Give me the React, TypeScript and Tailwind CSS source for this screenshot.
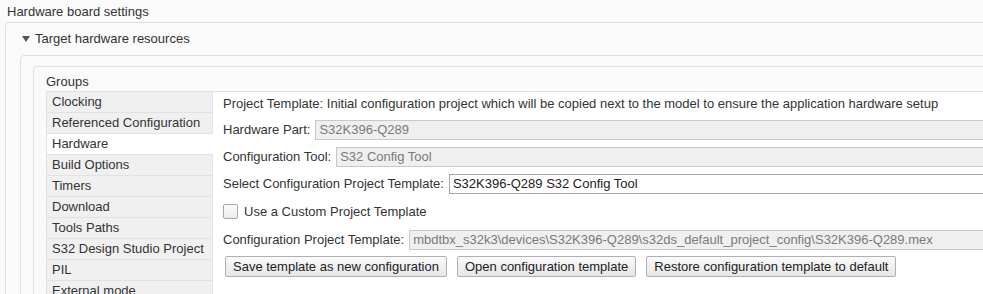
import React from 'react';

const groups = [
  'Clocking',
  'Referenced Configuration',
  'Hardware',
  'Build Options',
  'Timers',
  'Download',
  'Tools Paths',
  'S32 Design Studio Project',
  'PIL',
  'External mode',
];

const ReadOnlyField: React.FC<{ label: string; value: string; editable?: boolean; mt: string }> = ({ label, value, editable, mt }) => (
  <div className={`flex items-center h-[20px] ${mt}`}>
    <span className="whitespace-nowrap mr-[5px]">{label}</span>
    <div
      className={`flex-1 h-[20px] flex items-center pl-[3px] border whitespace-nowrap overflow-hidden ${
        editable ? 'bg-white text-[#222] border-[#a8a8a8]' : 'bg-[#efefef] text-[#7a7a7a] border-[#c8c8c8]'
      }`}
    >
      {value}
    </div>
  </div>
);

const Btn: React.FC<{ children: React.ReactNode }> = ({ children }) => (
  <button className="h-[21px] px-[7px] border border-[#b0b0b0] rounded-[2px] bg-gradient-to-b from-[#fafafa] to-[#e6e6e6] text-[#222] whitespace-nowrap leading-[19px]">
    {children}
  </button>
);

export default function App() {
  return (
    <div
      className="w-[983px] h-[294px] overflow-hidden bg-[#fafafa] text-[13px] text-[#333]"
      style={{ fontFamily: '"Liberation Sans", Arial, sans-serif' }}
    >
      <div className="h-[22px] pl-[7px] pt-[1px] leading-[22px] text-[#333]">Hardware board settings</div>

      {/* outer panel */}
      <div className="ml-[5px] -mr-[20px] border border-[#e0e0e0] rounded-[4px] h-[300px]">
        <div className="h-[32px] flex items-center pl-[16px]">
          <svg width="8" height="6" viewBox="0 0 8 6" className="mr-[5px]">
            <path d="M0 0 L8 0 L4 6 Z" fill="#555" />
          </svg>
          <span>Target hardware resources</span>
        </div>

        {/* second panel */}
        <div className="ml-[14px] border border-[#e0e0e0] rounded-[4px] h-[300px] pt-[10px]">
          {/* groups panel */}
          <div className="ml-[12px] border border-[#e0e0e0] rounded-[4px] h-[300px] pl-[12px]">
            <div className="h-[24px] leading-[29px]">Groups</div>
            <div className="flex">
              <div className="w-[167px] shrink-0 border-t border-[#e2e2e2]">
                {groups.map((g) => (
                  <div
                    key={g}
                    className={`h-[21px] pl-[5px] leading-[20px] border-b border-l border-[#e2e2e2] whitespace-nowrap ${
                      g === 'Hardware' ? 'bg-white' : 'bg-[#f0f0f0] border-r'
                    }`}
                  >
                    {g}
                  </div>
                ))}
              </div>
              <div className="flex-1 bg-white border-t border-[#e2e2e2] pl-[10px] h-[220px]">
                <div className="mt-[4px] h-[16px] leading-[16px] whitespace-nowrap">
                  Project Template: Initial configuration project which will be copied next to the model to ensure the application hardware setup
                </div>
                <ReadOnlyField mt="mt-[8px]" label="Hardware Part:" value="S32K396-Q289" />
                <ReadOnlyField mt="mt-[7px]" label="Configuration Tool:" value="S32 Config Tool" />
                <ReadOnlyField mt="mt-[7px]" label="Select Configuration Project Template:" value="S32K396-Q289 S32 Config Tool" editable />
                <div className="mt-[10px] h-[15px] flex items-center">
                  <div className="w-[15px] h-[15px] border border-[#a8a8a8] rounded-[2px] bg-gradient-to-b from-[#fbfbfb] to-[#ececec] mr-[6px]" />
                  <span>Use a Custom Project Template</span>
                </div>
                <ReadOnlyField
                  mt="mt-[11px]"
                  label="Configuration Project Template:"
                  value="mbdtbx_s32k3\devices\S32K396-Q289\s32ds_default_project_config\S32K396-Q289.mex"
                />
                <div className="mt-[6px] flex gap-[10px] pl-[2px]">
                  <Btn>Save template as new configuration</Btn>
                  <Btn>Open configuration template</Btn>
                  <Btn>Restore configuration template to default</Btn>
                </div>
              </div>
            </div>
          </div>
        </div>
      </div>
    </div>
  );
}
